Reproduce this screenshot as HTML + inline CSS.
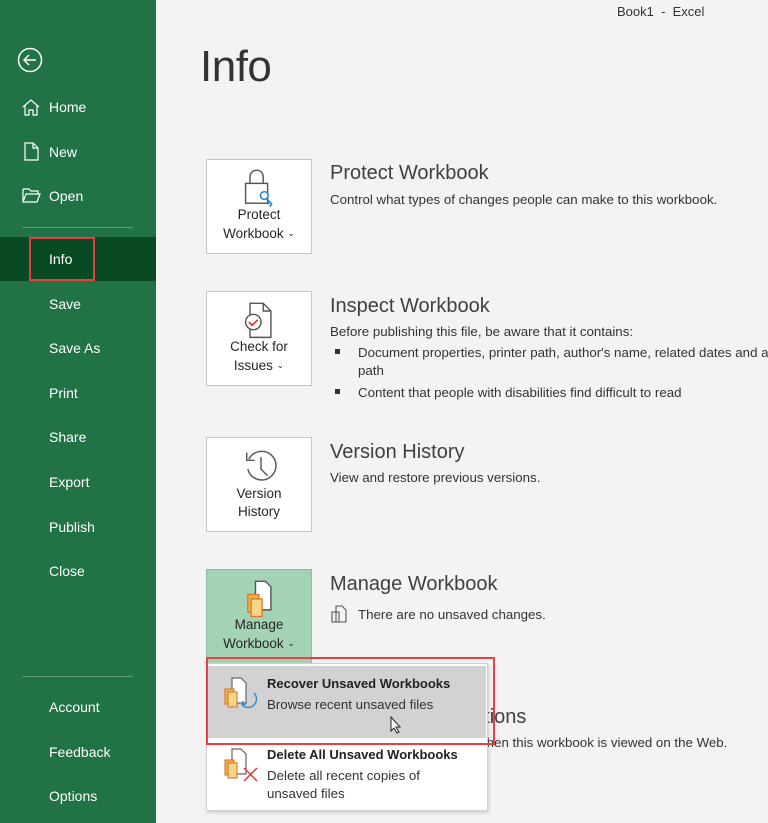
<!DOCTYPE html>
<html><head><style>
*{margin:0;padding:0;box-sizing:border-box}
body{width:768px;height:823px;overflow:hidden;background:#f3f3f3;font-family:"Liberation Sans",sans-serif;position:relative;color:#262626}
.a{position:absolute;white-space:nowrap}
#side{position:absolute;left:0;top:0;width:156px;height:823px;background:#217346}
.nav{position:absolute;left:49px;color:#fff;font-size:14px;line-height:18px}
.sep{position:absolute;left:22px;width:111px;height:1px;background:#5f9c7a}
.btn{position:absolute;left:206px;width:106px;height:95px;background:#fff;border:1px solid #c6c6c6;text-align:center;font-size:13.5px;line-height:18px;color:#262626}
.btn .lbl{position:absolute;left:0;right:0;bottom:10px}
.btn svg{position:absolute;left:34px;top:8px}
.cv{font-size:9px;vertical-align:2px}
.h{font-size:20px;color:#404040}
.d{font-size:13.3px;color:#333}
</style></head><body>
<div id="side">
<svg class="a" style="left:17px;top:47px" width="26" height="26" viewBox="0 0 26 26"><circle cx="13" cy="13" r="11.5" fill="none" stroke="#fff" stroke-width="1.5"/><path d="M19 13H7M12 8l-5 5 5 5" fill="none" stroke="#fff" stroke-width="1.5"/></svg>
<svg class="a" style="left:22px;top:98px" width="18" height="18" viewBox="0 0 18 18"><path d="M1 9L9 2l8 7M3 7v10h4v-5h4v5h4V7" fill="none" stroke="#fff" stroke-width="1.2"/></svg>
<div class="nav" style="top:98px">Home</div>
<svg class="a" style="left:24px;top:142px" width="15" height="19" viewBox="0 0 15 19"><path d="M1 1h8l5 5v12H1z M9 1v5h5" fill="none" stroke="#fff" stroke-width="1.2"/></svg>
<div class="nav" style="top:143px">New</div>
<svg class="a" style="left:22px;top:188px" width="19" height="15" viewBox="0 0 19 15"><path d="M1 1h6l2 2h7v3M1 1v13h14l3-8H4L1 14" fill="none" stroke="#fff" stroke-width="1.2"/></svg>
<div class="nav" style="top:187px">Open</div>
<div class="sep" style="top:227px"></div>
<div class="a" style="left:0;top:237px;width:156px;height:44px;background:#0a4a22"></div>
<div class="a" style="left:29px;top:237px;width:66px;height:44px;border:2px solid #e84040"></div>
<div class="nav" style="top:250px">Info</div>
<div class="nav" style="top:295px">Save</div>
<div class="nav" style="top:339px">Save As</div>
<div class="nav" style="top:384px">Print</div>
<div class="nav" style="top:428px">Share</div>
<div class="nav" style="top:473px">Export</div>
<div class="nav" style="top:518px">Publish</div>
<div class="nav" style="top:562px">Close</div>
<div class="sep" style="top:676px"></div>
<div class="nav" style="top:698px">Account</div>
<div class="nav" style="top:743px">Feedback</div>
<div class="nav" style="top:787px">Options</div>
</div>
<div class="a" style="left:617px;top:4px;font-size:13px;color:#333">Book1&nbsp; - &nbsp;Excel</div>
<div class="a" style="left:200px;top:42px;font-size:44px;font-weight:300;color:#333;letter-spacing:-0.5px">Info</div>

<div class="btn" style="top:159px"><svg width="40" height="44" viewBox="0 0 34 40"><path d="M7 14V8a6 6 0 0 1 12 0v6" fill="none" stroke="#555" stroke-width="1.3"/><rect x="3" y="14" width="20" height="18" fill="#fff" stroke="#555" stroke-width="1.3"/><circle cx="20" cy="25" r="3.5" fill="#fff" stroke="#2a8ad4" stroke-width="1.5"/><path d="M22 28l5 5M25 31l-2 2M27 33l-2 2" stroke="#2a8ad4" stroke-width="1.5"/></svg><div class="lbl">Protect<br>Workbook <span class="cv">&#8964;</span></div></div>
<div class="a h" style="left:330px;top:162px">Protect Workbook</div>
<div class="a d" style="left:330px;top:192px">Control what types of changes people can make to this workbook.</div>

<div class="btn" style="top:291px"><svg width="40" height="44" viewBox="0 0 34 40"><path d="M7 3h12l7 7v24H7z M19 3v7h7" fill="#fff" stroke="#555" stroke-width="1.3"/><circle cx="10" cy="20" r="7" fill="#fff" stroke="#555" stroke-width="1.3"/><path d="M6 20l3 3 5-5" fill="none" stroke="#e03030" stroke-width="1.5"/></svg><div class="lbl">Check for<br>Issues <span class="cv">&#8964;</span></div></div>
<div class="a h" style="left:330px;top:295px">Inspect Workbook</div>
<div class="a d" style="left:330px;top:324px">Before publishing this file, be aware that it contains:</div>
<div class="a" style="left:335px;top:349px;width:5px;height:5px;background:#333"></div>
<div class="a d" style="left:358px;top:345px">Document properties, printer path, author's name, related dates and a</div>
<div class="a d" style="left:358px;top:363px">path</div>
<div class="a" style="left:335px;top:389px;width:5px;height:5px;background:#333"></div>
<div class="a d" style="left:358px;top:385px">Content that people with disabilities find difficult to read</div>

<div class="btn" style="top:437px"><svg width="40" height="44" viewBox="0 0 34 40"><path d="M6 12a13 13 0 1 1 -1 9" fill="none" stroke="#555" stroke-width="1.3"/><path d="M4 6v7h7" fill="none" stroke="#555" stroke-width="1.3"/><path d="M17 10v11l6 6" fill="none" stroke="#555" stroke-width="1.3"/></svg><div class="lbl">Version<br>History</div></div>
<div class="a h" style="left:330px;top:441px">Version History</div>
<div class="a d" style="left:330px;top:470px">View and restore previous versions.</div>

<div class="btn" style="top:569px;background:#a3d2b5;border-color:#86c09c"><svg width="40" height="44" viewBox="0 0 34 40"><path d="M12 3h9l5 5v21H12z" fill="#fff" stroke="#555" stroke-width="1.3"/><rect x="5" y="15" width="10" height="16" fill="#f5b24a" stroke="#d9772a" stroke-width="1.2"/><rect x="8" y="19" width="10" height="16" fill="#fbd68a" stroke="#d9772a" stroke-width="1.2"/></svg><div class="lbl">Manage<br>Workbook <span class="cv">&#8964;</span></div></div>
<div class="a h" style="left:330px;top:573px">Manage Workbook</div>
<svg class="a" style="left:331px;top:605px" width="16" height="18" viewBox="0 0 16 18"><path d="M5 1h6l4 4v12H5z M1 7h7v10H1z" fill="none" stroke="#555" stroke-width="1.1"/></svg>
<div class="a d" style="left:358px;top:607px">There are no unsaved changes.</div>
<div class="a h" style="left:330px;top:706px">Browser View Options</div>
<div class="a d" style="left:330px;top:735px">Pick what users can see when this workbook is viewed on the Web.</div>

<div class="a" style="left:206px;top:663px;width:282px;height:148px;background:#fff;border:1px solid #d0d0d0;box-shadow:1px 2px 3px rgba(0,0,0,.15)"></div>
<div class="a" style="left:208px;top:666px;width:278px;height:72px;background:#d2d2d2"></div>
<div class="a" style="left:206px;top:657px;width:289px;height:88px;border:2px solid #e84040"></div>
<svg class="a" style="left:224px;top:677px" width="36" height="34" viewBox="0 0 36 34"><path d="M8 1h9l5 5v20H8z" fill="#fff" stroke="#666" stroke-width="1.2"/><rect x="1" y="12" width="9" height="15" fill="#f5b24a" stroke="#d9772a" stroke-width="1.1"/><rect x="4" y="15" width="9" height="15" fill="#fbd68a" stroke="#d9772a" stroke-width="1.1"/><path d="M30 16a8 8 0 0 1 -12 12M18 28l4 -1M18 28l1 -4" fill="none" stroke="#2a8ad4" stroke-width="1.4"/></svg>
<div class="a" style="left:267px;top:676px;font-size:13px;font-weight:bold;color:#222">Recover Unsaved Workbooks</div>
<div class="a d" style="left:267px;top:697px">Browse recent unsaved files</div>
<svg class="a" style="left:390px;top:716px" width="12" height="18" viewBox="0 0 12 18"><path d="M1 1v14l3-3 3 5 2-1-3-5h4z" fill="#fff" stroke="#222" stroke-width="1"/></svg>
<svg class="a" style="left:224px;top:748px" width="36" height="34" viewBox="0 0 36 34"><path d="M8 1h9l5 5v20H8z" fill="#fff" stroke="#666" stroke-width="1.2"/><rect x="1" y="12" width="9" height="15" fill="#f5b24a" stroke="#d9772a" stroke-width="1.1"/><rect x="4" y="15" width="9" height="15" fill="#fbd68a" stroke="#d9772a" stroke-width="1.1"/><path d="M20 20l13 13M33 20L20 33" stroke="#e03030" stroke-width="1.4"/></svg>
<div class="a" style="left:267px;top:747px;font-size:13px;font-weight:bold;color:#222">Delete All Unsaved Workbooks</div>
<div class="a d" style="left:267px;top:768px">Delete all recent copies of</div>
<div class="a d" style="left:267px;top:786px">unsaved files</div>
</body></html>
